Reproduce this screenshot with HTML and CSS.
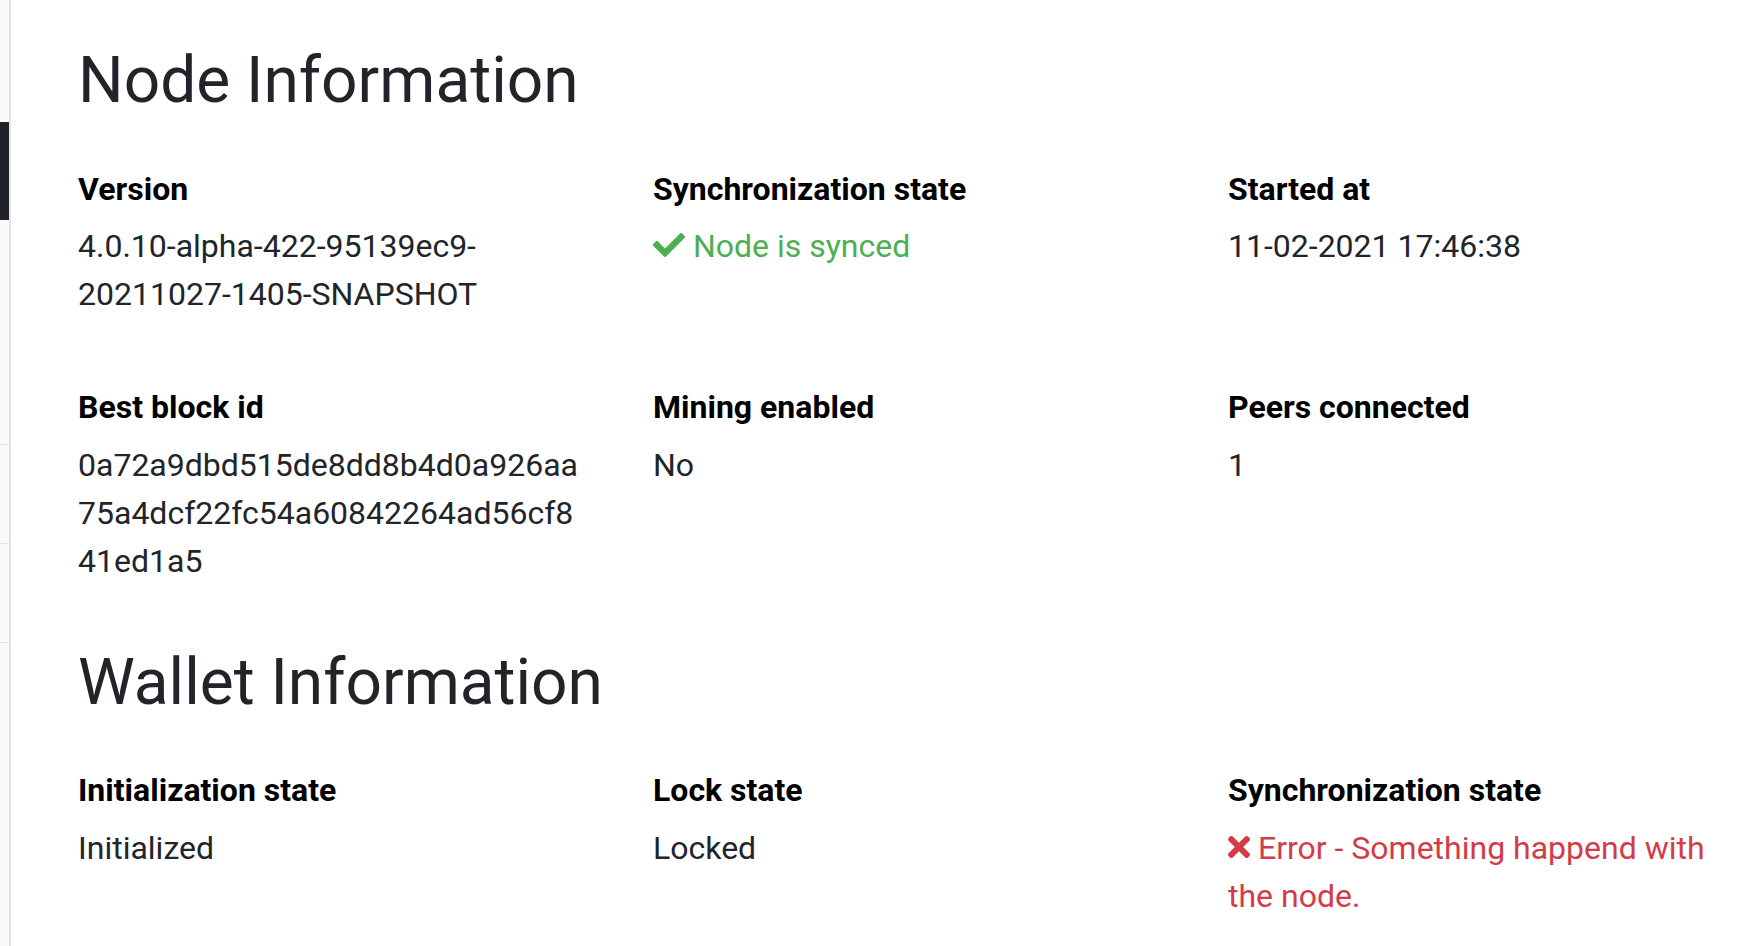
FILE: index.html
```html
<!DOCTYPE html>
<html lang="en">
<head>
  <meta charset="UTF-8" />
  <meta name="viewport" content="width=device-width, initial-scale=1.0"/>
  <title>Node Information</title>
  <link rel="stylesheet" href="styles.css">
</head>
<body>
  <aside class="sidebar">
    <div class="nav-item nav-top"></div>
    <div class="nav-item active"></div>
    <div class="nav-item nav-tall"></div>
    <div class="nav-item"></div>
    <div class="nav-item"></div>
  </aside>

  <main class="main">
    <!-- node -->
    <section class="info-section">
      <h2>Node Information</h2>
      <div class="info-grid">
        <div class="field">
          <h6>Version</h6>
          <p>4.0.10-alpha-422-95139ec9-20211027-1405-SNAPSHOT</p>
        </div>
        <div class="field">
          <h6>Synchronization state</h6>
          <p class="text-success">
            <svg class="icon icon-check" viewBox="0 0 512 512"><path d="M173.9 439.4l-166.4-166.4c-10-10-10-26.2 0-36.2l36.2-36.2c10-10 26.2-10 36.2 0L192 312.7 432.1 72.6c10-10 26.2-10 36.2 0l36.2 36.2c10 10 10 26.2 0 36.2l-294.4 294.4c-10 10-26.2 10-36.2 0z"/></svg>
            Node is synced
          </p>
        </div>
        <div class="field">
          <h6>Started at</h6>
          <p>11-02-2021 17:46:38</p>
        </div>
        <div class="field">
          <h6>Best block id</h6>
          <p class="hash">0a72a9dbd515de8dd8b4d0a926aa75a4dcf22fc54a60842264ad56cf841ed1a5</p>
        </div>
        <div class="field">
          <h6>Mining enabled</h6>
          <p>No</p>
        </div>
        <div class="field">
          <h6>Peers connected</h6>
          <p>1</p>
        </div>
      </div>
    </section>

    <!-- wallet -->
    <section class="info-section">
      <h2>Wallet Information</h2>
      <div class="info-grid">
        <div class="field">
          <h6>Initialization state</h6>
          <p>Initialized</p>
        </div>
        <div class="field">
          <h6>Lock state</h6>
          <p>Locked</p>
        </div>
        <div class="field">
          <h6>Synchronization state</h6>
          <p class="text-danger">
            <svg class="icon icon-times" viewBox="0 0 352 512"><path d="M242.7 256l100.1-100.1c12.3-12.3 12.3-32.2 0-44.5l-22.2-22.2c-12.3-12.3-32.2-12.3-44.5 0L176 189.3 75.9 89.2c-12.3-12.3-32.2-12.3-44.5 0L9.2 111.5c-12.3 12.3-12.3 32.2 0 44.5L109.3 256 9.2 356.1c-12.3 12.3-12.3 32.2 0 44.5l22.2 22.2c12.3 12.3 32.2 12.3 44.5 0L176 322.7l100.1 100.1c12.3 12.3 32.2 12.3 44.5 0l22.2-22.2c12.3-12.3 12.3-32.2 0-44.5L242.7 256z"/></svg>
            Error - Something happend with the node.
          </p>
        </div>
      </div>
    </section>
  </main>
</body>
</html>
```

FILE: styles.css
```css
* {
  margin: 0;
  padding: 0;
  box-sizing: border-box;
}

body {
  display: flex;
  min-height: 100vh;
  background: #fff;
  color: #212529;
  font-family: Roboto, "Liberation Sans", sans-serif;
  font-size: 32px;
  line-height: 1.5;
  overflow: hidden;
}

/* 側欄 */
.sidebar {
  width: 11px;
  flex-shrink: 0;
  background: #fafafa;
  border-right: 2px solid #e3e3e3;
  display: flex;
  flex-direction: column;
}

.nav-item {
  height: 99px;
  border-bottom: 1px solid #e3e3e3;
}

.nav-top {
  height: 122px;
  border-bottom: none;
}

.nav-item.active {
  height: 98px;
  background: #1f2226;
  border-bottom: none;
}

.nav-tall {
  height: 225px;
}

/* 主要內容 */
.main {
  flex: 1;
  padding: 43px 0 0 67px;
}

.info-section h2 {
  font-size: 64px;
  font-weight: 400;
  line-height: 1.2;
  color: #212529;
  margin-bottom: 50px;
}

.info-section + .info-section {
  margin-top: 60px;
}

.info-grid {
  display: grid;
  grid-template-columns: repeat(3, 510px);
  column-gap: 65px;
  row-gap: 70px;
}

.field h6 {
  font-size: 32px;
  font-weight: 700;
  line-height: 1.2;
  color: #000;
  margin-bottom: 14px;
}

.field p {
  color: #212529;
}

.hash {
  word-break: break-all;
}

.text-success {
  color: #4caf50 !important;
}

.text-danger {
  color: #d33c47 !important;
}

.icon {
  height: 1em;
  vertical-align: -0.125em;
  fill: currentColor;
}

.icon-check {
  width: 1em;
}

.icon-times {
  width: 0.6875em;
}
```
